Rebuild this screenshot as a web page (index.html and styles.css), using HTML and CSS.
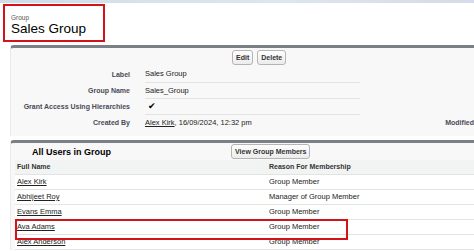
FILE: index.html
```html
<!DOCTYPE html>
<html lang="en">
<head>
  <meta charset="UTF-8" />
  <title>Group: Sales Group</title>
  <link rel="stylesheet" href="styles.css">
</head>
<body>
  <div class="topbar"></div>

  <div class="page-header">
    <div class="title-box">
      <div class="type">Group</div>
      <h1>Sales Group</h1>
    </div>
  </div>

  <div class="block detail">
    <div class="btn-row">
      <button class="btn">Edit</button>
      <button class="btn">Delete</button>
    </div>
    <table class="detail-list">
      <tr>
        <td class="label">Label</td>
        <td class="value">Sales Group</td>
        <td class="label2"></td>
      </tr>
      <tr>
        <td class="label">Group Name</td>
        <td class="value">Sales_Group</td>
        <td class="label2"></td>
      </tr>
      <tr>
        <td class="label">Grant Access Using Hierarchies</td>
        <td class="value"><span class="check">&#10004;</span></td>
        <td class="label2"></td>
      </tr>
      <tr class="last">
        <td class="label">Created By</td>
        <td class="value"><a href="#">Alex Kirk</a>, 16/09/2024, 12:32 pm</td>
        <td class="label2">Modified</td>
      </tr>
    </table>
  </div>

  <div class="block related">
    <div class="related-head">
      <h2>All Users in Group</h2>
      <button class="btn">View Group Members</button>
    </div>
    <table class="list">
      <tr class="head">
        <th class="name">Full Name</th>
        <th>Reason For Membership</th>
      </tr>
      <tr>
        <td><a href="#">Alex Kirk</a></td>
        <td>Group Member</td>
      </tr>
      <tr>
        <td><a href="#">Abhijeet Roy</a></td>
        <td>Manager of Group Member</td>
      </tr>
      <tr>
        <td><a href="#">Evans Emma</a></td>
        <td>Group Member</td>
      </tr>
      <tr class="marked">
        <td><a href="#">Ava Adams</a></td>
        <td>Group Member</td>
      </tr>
      <tr>
        <td><a href="#">Alex Anderson</a></td>
        <td>Group Member</td>
      </tr>
    </table>
  </div>
</body>
</html>
```

FILE: styles.css
```css
:root {
  --text: #222;
  --label: #4a4a56;
  --block-bg: #f8f8f8;
  --line: #e3e3e3;
  --highlight: #d3121a;
}

* {
  margin: 0;
  padding: 0;
  box-sizing: border-box;
}

body {
  font-family: "Liberation Sans", Arial, sans-serif;
  color: var(--text);
  background: #fff;
  font-size: 7.5px;
  overflow: hidden;
}

.topbar {
  height: 3px;
  background: linear-gradient(to right, #cfdde9, #dce6ef 60%, #d4dbea);
}

.page-header {
  padding: 1px 0 0 3px;
}

.title-box {
  width: 102px;
  height: 38px;
  border: 2px solid var(--highlight);
  padding: 8px 0 0 6px;
}

.type {
  font-size: 6.5px;
  color: #555;
  line-height: 7px;
}

h1 {
  font-size: 13.5px;
  font-weight: normal;
  color: #000;
  line-height: 15px;
}

.block {
  margin-left: 10px;
  background: var(--block-bg);
  border-top: 3px solid #7b7f86;
  border-left: 1px solid #eaeaea;
  border-top-left-radius: 4px;
}

.detail {
  margin-top: 3px;
  height: 91px;
}

.btn-row {
  display: flex;
  gap: 4px;
  padding: 2px 0 0 221px;
}

.btn {
  font-family: inherit;
  font-size: 7px;
  font-weight: bold;
  color: #333;
  background: linear-gradient(#fefefe, #ececec);
  border: 1px solid #b5b5b5;
  border-radius: 3px;
  padding: 2px 3px;
  line-height: 9px;
}

.detail-list {
  border-collapse: collapse;
  margin-top: 1px;
  width: 100%;
}

.detail-list td {
  height: 16px;
  vertical-align: middle;
  white-space: nowrap;
}

.detail-list .label {
  width: 134px;
  text-align: right;
  font-weight: bold;
  color: var(--label);
  font-size: 7px;
  padding-right: 15px;
}

.detail-list .value {
  width: 215px;
  border-bottom: 1px solid var(--line);
}

.detail-list .last .value {
  border-bottom: none;
}

.detail-list .label2 {
  text-align: right;
  font-weight: bold;
  color: var(--label);
  font-size: 7px;
}

.check {
  font-size: 9px;
  color: #000;
  padding-left: 3px;
}

a {
  color: #222;
  text-decoration: underline;
}

.related {
  margin-top: 4px;
}

.related-head {
  display: flex;
  align-items: center;
  height: 17px;
  padding-left: 21px;
}

h2 {
  font-size: 9px;
  font-weight: bold;
  color: #000;
  width: 199px;
}

.list {
  border-collapse: collapse;
  margin-left: 4px;
  width: calc(100% - 4px);
  background: #fff;
}

.list th,
.list td {
  text-align: left;
  height: 15px;
  padding-left: 2px;
  border-bottom: 1px solid var(--line);
  white-space: nowrap;
}

.list th {
  font-size: 7px;
  color: #333;
  background: #f2f3f3;
  height: 14px;
}

.list .name {
  width: 252px;
}

.marked td:first-child {
  position: relative;
}

/* annotation box drawn over the row */
.marked td:first-child::after {
  content: "";
  position: absolute;
  left: 0;
  top: -1px;
  width: 329px;
  height: 17px;
  border: 2px solid var(--highlight);
}
```
